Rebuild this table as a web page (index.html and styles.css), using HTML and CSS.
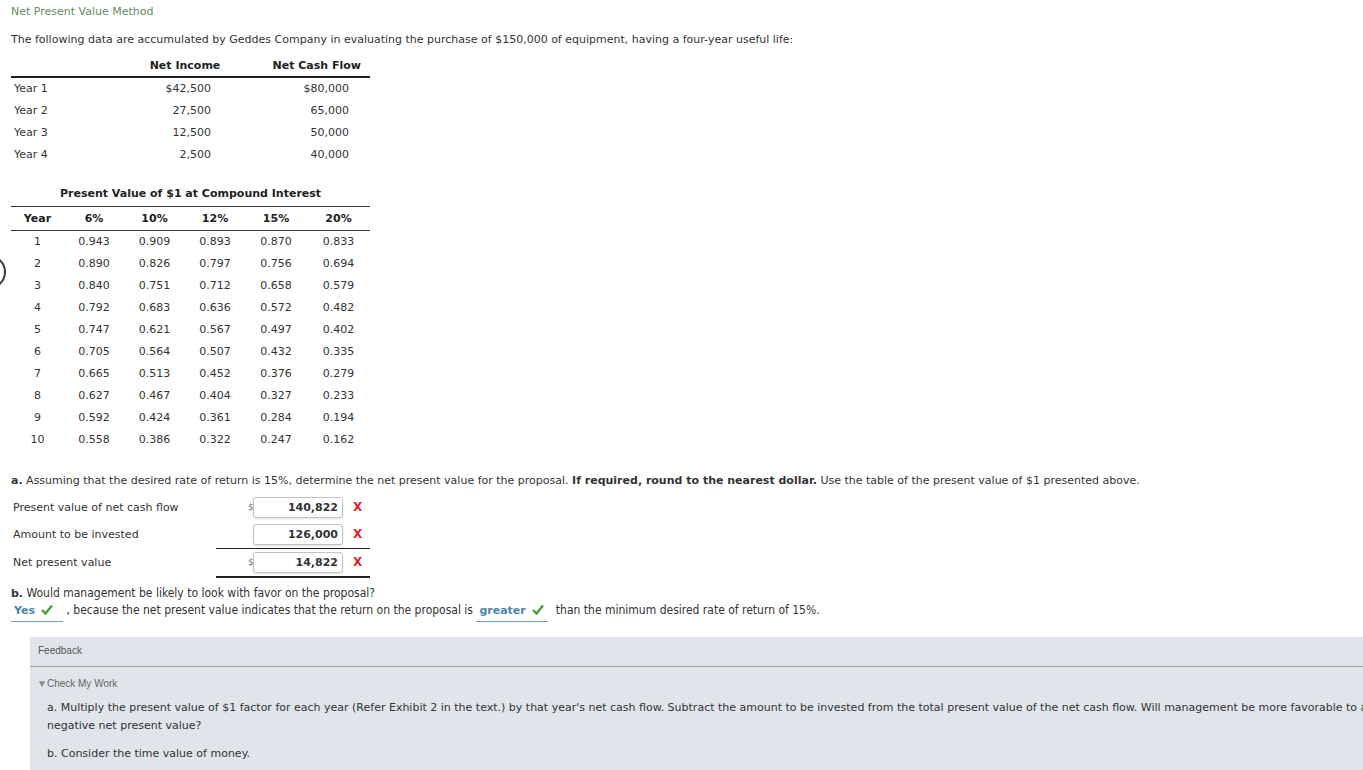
FILE: index.html
```html
<!DOCTYPE html>
<html lang="en">
<head>
    <meta charset="UTF-8">
    <title>Net Present Value Method</title>
    <link rel="stylesheet" href="styles.css">
</head>
<body>
<div class="page">
    <svg class="edge-ring" width="8" height="36" viewBox="0 0 8 36"><circle cx="-11" cy="18" r="16" fill="none" stroke="#3a3a3a" stroke-width="2"/></svg>

    <h1 class="title">Net Present Value Method</h1>
    <p class="intro">The following data are accumulated by Geddes Company in evaluating the purchase of $150,000 of equipment, having a four-year useful life:</p>

    <table class="data-table">
        <thead>
            <tr><th class="c-year"></th><th class="c-income">Net Income</th><th class="c-flow">Net Cash Flow</th></tr>
        </thead>
        <tbody>
            <tr><td class="c-year">Year 1</td><td class="c-income">$42,500</td><td class="c-flow">$80,000</td></tr>
            <tr><td class="c-year">Year 2</td><td class="c-income">27,500</td><td class="c-flow">65,000</td></tr>
            <tr><td class="c-year">Year 3</td><td class="c-income">12,500</td><td class="c-flow">50,000</td></tr>
            <tr><td class="c-year">Year 4</td><td class="c-income">2,500</td><td class="c-flow">40,000</td></tr>
        </tbody>
    </table>

    <table class="pv-table">
        <colgroup>
            <col style="width:53px"><col style="width:60px"><col style="width:61px"><col style="width:60px"><col style="width:62px"><col style="width:63px">
        </colgroup>
        <thead>
            <tr><th colspan="6" class="pv-caption">Present Value of $1 at Compound Interest</th></tr>
            <tr class="pv-head"><th>Year</th><th>6%</th><th>10%</th><th>12%</th><th>15%</th><th>20%</th></tr>
        </thead>
        <tbody>
            <tr><td>1</td><td>0.943</td><td>0.909</td><td>0.893</td><td>0.870</td><td>0.833</td></tr>
            <tr><td>2</td><td>0.890</td><td>0.826</td><td>0.797</td><td>0.756</td><td>0.694</td></tr>
            <tr><td>3</td><td>0.840</td><td>0.751</td><td>0.712</td><td>0.658</td><td>0.579</td></tr>
            <tr><td>4</td><td>0.792</td><td>0.683</td><td>0.636</td><td>0.572</td><td>0.482</td></tr>
            <tr><td>5</td><td>0.747</td><td>0.621</td><td>0.567</td><td>0.497</td><td>0.402</td></tr>
            <tr><td>6</td><td>0.705</td><td>0.564</td><td>0.507</td><td>0.432</td><td>0.335</td></tr>
            <tr><td>7</td><td>0.665</td><td>0.513</td><td>0.452</td><td>0.376</td><td>0.279</td></tr>
            <tr><td>8</td><td>0.627</td><td>0.467</td><td>0.404</td><td>0.327</td><td>0.233</td></tr>
            <tr><td>9</td><td>0.592</td><td>0.424</td><td>0.361</td><td>0.284</td><td>0.194</td></tr>
            <tr><td>10</td><td>0.558</td><td>0.386</td><td>0.322</td><td>0.247</td><td>0.162</td></tr>
        </tbody>
    </table>

    <p class="question"><b>a.</b> Assuming that the desired rate of return is 15%, determine the net present value for the proposal. <b>If required, round to the nearest dollar.</b> Use the table of the present value of $1 presented above.</p>

    <table class="answer-table">
        <tr>
            <td class="answer-label">Present value of net cash flow</td>
            <td class="answer-cell"><div class="answer-wrap"><span class="dollar">$</span><span class="answer-box">140,822</span><span class="wrong">X</span></div></td>
        </tr>
        <tr class="sub-line">
            <td class="answer-label">Amount to be invested</td>
            <td class="answer-cell"><div class="answer-wrap"><span class="dollar"></span><span class="answer-box">126,000</span><span class="wrong">X</span></div></td>
        </tr>
        <tr class="total-line">
            <td class="answer-label">Net present value</td>
            <td class="answer-cell"><div class="answer-wrap"><span class="dollar">$</span><span class="answer-box">14,822</span><span class="wrong">X</span></div></td>
        </tr>
    </table>

    <p class="question-b"><b>b.</b> Would management be likely to look with favor on the proposal?</p>
    <p class="answer-line"><span class="choice choice-yes">Yes <svg class="tick" width="12" height="11" viewBox="0 0 12 11"><path d="M1 6 L4.5 9.5 L11 1.5" fill="none" stroke="#4f9a3a" stroke-width="2.4"/></svg></span> , because the net present value indicates that the return on the proposal is <span class="choice choice-greater">greater <svg class="tick" width="12" height="11" viewBox="0 0 12 11"><path d="M1 6 L4.5 9.5 L11 1.5" fill="none" stroke="#4f9a3a" stroke-width="2.4"/></svg></span> than the minimum desired rate of return of 15%.</p>

    <div class="feedback">
        <div class="feedback-head">Feedback</div>
        <div class="check-work"><span class="caret">&#9660;</span>Check My Work</div>
        <p>a. Multiply the present value of $1 factor for each year (Refer Exhibit 2 in the text.) by that year's net cash flow. Subtract the amount to be invested from the total present value of the net cash flow. Will management be more favorable to a positive or negative net present value?</p>
        <p>b. Consider the time value of money.</p>
    </div>
</div>
</body>
</html>
```

FILE: styles.css
```css
html, body {
    margin: 0;
    overflow: hidden;
}

body {
    font-family: "DejaVu Sans", Verdana, sans-serif;
    font-size: 11px;
    color: #333;
    background: #fff;
}

.page {
    position: relative;
    padding: 5px 0 0 11px;
}

.edge-ring {
    position: absolute;
    left: 0;
    top: 254px;
}

.title {
    margin: 0;
    font-size: 11px;
    font-weight: normal;
    line-height: 14px;
    color: #5f8d5f;
}

.intro {
    margin: 14px 0 0;
    line-height: 14px;
}

/* data table */
.data-table {
    margin-top: 8px;
    border-collapse: collapse;
    table-layout: fixed;
    width: 359px;
}
.data-table th,
.data-table td {
    box-sizing: border-box;
}
.data-table th {
    height: 22px;
    padding: 0;
    font-weight: bold;
    color: #222;
    border-bottom: 2px solid #222;
}
.data-table td {
    height: 22px;
    padding: 0;
    line-height: 22px;
}
.data-table .c-year {
    width: 119px;
    padding-left: 3px;
    text-align: left;
}
.data-table .c-income {
    width: 110px;
}
.data-table th.c-income {
    text-align: center;
}
.data-table td.c-income {
    text-align: right;
    padding-right: 29px;
}
.data-table .c-flow {
    width: 130px;
    text-align: right;
}
.data-table th.c-flow {
    padding-right: 9px;
}
.data-table td.c-flow {
    padding-right: 21px;
}

/* present value table */
.pv-table {
    margin-top: 19px;
    border-collapse: collapse;
    table-layout: fixed;
    width: 359px;
}
.pv-table th,
.pv-table td {
    box-sizing: border-box;
}
.pv-table th {
    padding: 0;
    font-weight: bold;
    color: #222;
    text-align: center;
}
.pv-caption {
    height: 21px;
    padding-bottom: 3px !important;
    border-bottom: 1px solid #333;
}
.pv-head th {
    height: 24px;
    border-bottom: 1px solid #333;
}
.pv-table td {
    height: 22px;
    padding: 0;
    line-height: 22px;
    text-align: center;
}

.question {
    margin: 23px 0 0;
    line-height: 14px;
}

/* answers */
.answer-table {
    margin-top: 6px;
    border-collapse: collapse;
}
.answer-table td {
    padding: 3px 0;
}
.answer-label {
    width: 203px;
    padding-left: 2px !important;
}
.answer-cell {
    width: 154px;
}
.sub-line .answer-cell {
    border-bottom: 1px solid #222;
}
.total-line .answer-cell {
    border-bottom: 2px solid #222;
}
.answer-wrap {
    display: flex;
    align-items: center;
    padding-left: 32px;
}
.dollar {
    width: 5px;
    font-size: 9px;
    color: #777;
}
.answer-box {
    width: 84px;
    height: 19px;
    padding-right: 4px;
    border: 1px solid #c3c3c3;
    border-radius: 3px;
    box-shadow: 0 1px 2px rgba(0, 0, 0, 0.12);
    font-weight: bold;
    line-height: 19px;
    text-align: right;
    color: #333;
    background: #fff;
}
.wrong {
    margin-left: 10px;
    font-weight: bold;
    font-size: 12px;
    color: #e21d1d;
}

/* part b */
.question-b {
    margin: 7px 0 0;
    font-family: "DejaVu Sans Condensed", "Liberation Sans", sans-serif;
    font-stretch: condensed;
    font-size: 12px;
    line-height: 16px;
}
.question-b b {
    font-family: "DejaVu Sans", sans-serif;
    font-stretch: normal;
    font-size: 11px;
}
.answer-line {
    margin: 0;
    font-family: "DejaVu Sans Condensed", "Liberation Sans", sans-serif;
    font-stretch: condensed;
    font-size: 12px;
    line-height: 16px;
}
.choice {
    display: inline-block;
    padding: 0 3px 2px;
    border-bottom: 1px solid #6e9bb9;
    font-family: "DejaVu Sans", sans-serif;
    font-stretch: normal;
    font-size: 11px;
    font-weight: bold;
    color: #4c86aa;
}
.choice-yes {
    width: 46px;
}
.choice-greater {
    width: 66px;
    margin-right: 4px;
}
.tick {
    vertical-align: -1px;
    margin-left: 2px;
}

/* feedback */
.feedback {
    width: 1440px;
    margin: 15px 0 0 19px;
    padding-bottom: 20px;
    background: #dfe5ea;
}
.feedback-head {
    height: 29px;
    padding-left: 8px;
    line-height: 27px;
    border-bottom: 1px solid #9a9fa3;
    font-family: "Liberation Sans", Arial, sans-serif;
    font-size: 10px;
    color: #555;
}
.check-work {
    margin-top: 10px;
    padding-left: 7px;
    line-height: 14px;
    font-family: "Liberation Sans", Arial, sans-serif;
    font-size: 10px;
    color: #666;
}
.caret {
    font-size: 10px;
    color: #888;
}
.feedback p {
    margin: 8px 0 0;
    padding: 0 17px;
    font-size: 11px;
    line-height: 18px;
}
.feedback p + p {
    margin-top: 10px;
}
```
